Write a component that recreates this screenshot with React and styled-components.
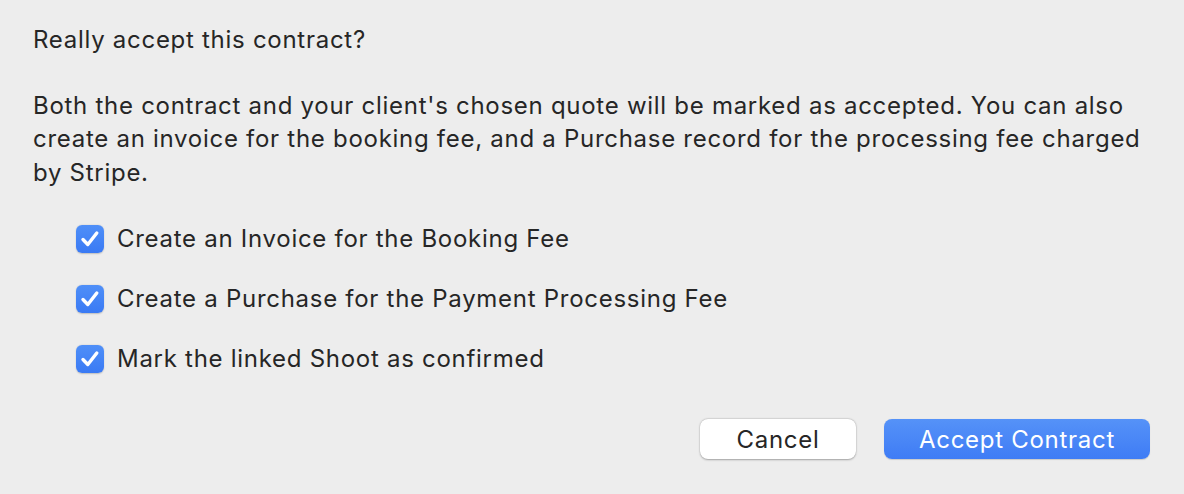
import React from "react";
import styled, { createGlobalStyle } from "styled-components";

const GlobalStyle = createGlobalStyle`
  html, body {
    margin: 0;
    padding: 0;
    background: #ededed;
  }
  body {
    font-family: Inter, "Noto Sans", sans-serif;
    color: #262626;
  }
`;

const Dialog = styled.div`
  width: 1184px;
  height: 494px;
  box-sizing: border-box;
  padding: 23px 34px 0 33px;
  display: flex;
  flex-direction: column;
  font-size: 24px;
  letter-spacing: 0.72px;
  line-height: 33.5px;
`;

const Title = styled.div``;

const Message = styled.p`
  margin: 32px 0 0;
  white-space: nowrap;
`;

const Options = styled.div`
  margin-top: 28px;
  padding-left: 43px;
  display: flex;
  flex-direction: column;
  gap: 16px;
`;

const Option = styled.label`
  display: flex;
  align-items: center;
  gap: 13px;
  height: 44px;
`;

const Box = styled.span`
  width: 28px;
  height: 28px;
  border-radius: 6px;
  background: linear-gradient(#4f8ff8, #3a7af4);
  box-shadow: 0 0.5px 1.5px rgba(0, 0, 0, 0.2);
  display: flex;
  align-items: center;
  justify-content: center;
`;

const Buttons = styled.div`
  margin-top: 38px;
  display: flex;
  justify-content: flex-end;
  gap: 28px;
`;

const Button = styled.button`
  height: 40px;
  width: ${(p) => p.$w}px;
  border-radius: 8px;
  border: none;
  font-family: inherit;
  font-size: 24px;
  letter-spacing: 0.72px;
  padding: 0;
  color: ${(p) => (p.$primary ? "#fff" : "#262626")};
  background: ${(p) =>
    p.$primary ? "linear-gradient(#5592f8, #3f7cf5)" : "#fff"};
  box-shadow: ${(p) =>
    p.$primary
      ? "0 0.5px 1px rgba(0,0,0,0.15)"
      : "0 0.5px 2px rgba(0,0,0,0.3), 0 0 0 0.5px rgba(0,0,0,0.06)"};
`;

const Check = () => (
  <svg width="20" height="18" viewBox="0 0 20 18">
    <path
      d="M3 9.5 L7.8 14.5 L16.8 3"
      fill="none"
      stroke="#fff"
      strokeWidth="3.4"
      strokeLinecap="round"
      strokeLinejoin="round"
    />
  </svg>
);

const options = [
  "Create an Invoice for the Booking Fee",
  "Create a Purchase for the Payment Processing Fee",
  "Mark the linked Shoot as confirmed",
];

export default function App() {
  return (
    <>
      <GlobalStyle />
      <Dialog>
        <Title>Really accept this contract?</Title>
        <Message>
          Both the contract and your client's chosen quote will be marked as
          accepted. You can also
          <br />
          create an invoice for the booking fee, and a Purchase record for the
          processing fee charged
          <br />
          by Stripe.
        </Message>
        <Options>
          {options.map((o) => (
            <Option key={o}>
              <Box>
                <Check />
              </Box>
              {o}
            </Option>
          ))}
        </Options>
        <Buttons>
          <Button $w={156}>Cancel</Button>
          <Button $w={266} $primary>
            Accept Contract
          </Button>
        </Buttons>
      </Dialog>
    </>
  );
}
